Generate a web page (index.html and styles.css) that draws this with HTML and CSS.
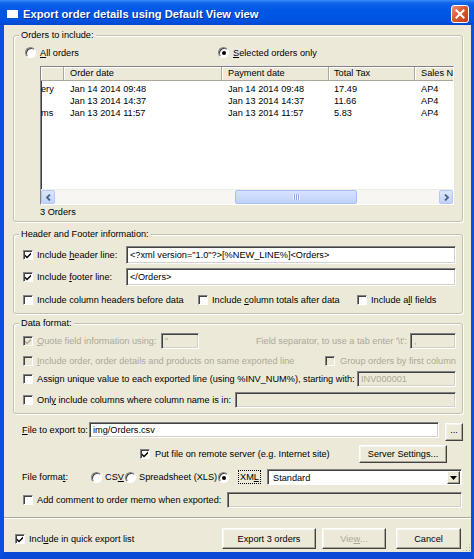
FILE: index.html
```html
<!DOCTYPE html>
<html>
<head>
<meta charset="utf-8">
<title>Export order details</title>
<link rel="stylesheet" href="styles.css">
</head>
<body>
<div class="window">
  <div class="titlebar">
    <span class="ticon"></span>
    <span class="title">Export order details using Default View view</span>
    <span class="close"><svg width="10" height="10" viewBox="0 0 10 10"><path d="M1.5 1.5 L8.5 8.5 M8.5 1.5 L1.5 8.5" stroke="#fff" stroke-width="2" stroke-linecap="square"/></svg></span>
  </div>
  <div class="client">
    <div class="group g1">
      <span class="legend">Orders to include:</span>
      <div class="row radio-row">
        <div class="item w-all"><span class="rb"></span><span class="t"><u>A</u>ll orders</span></div>
        <div class="item"><span class="rb on"></span><span class="t"><u>S</u>elected orders only</span></div>
      </div>
      <div class="list">
        <div class="lv-head">
          <div class="hc c1"></div>
          <div class="hc">Order date</div>
          <div class="hc">Payment date</div>
          <div class="hc c4">Total Tax</div>
          <div class="hc">Sales N</div>
        </div>
        <div class="lv-body">
          <div class="lv-row"><div class="cell c1">ery</div><div class="cell">Jan 14 2014 09:48</div><div class="cell">Jan 14 2014 09:48</div><div class="cell c4">17.49</div><div class="cell">AP4</div></div>
          <div class="lv-row"><div class="cell c1"></div><div class="cell">Jan 13 2014 14:37</div><div class="cell">Jan 13 2014 14:37</div><div class="cell c4">11.66</div><div class="cell">AP4</div></div>
          <div class="lv-row"><div class="cell c1">ms</div><div class="cell">Jan 13 2014 11:57</div><div class="cell">Jan 13 2014 11:57</div><div class="cell c4">5.83</div><div class="cell">AP4</div></div>
        </div>
        <div class="hscroll">
          <span class="sbtn"><svg width="7" height="7" viewBox="0 0 7 7"><path d="M5 0.5 L2 3.5 L5 6.5" fill="none" stroke="#4D6185" stroke-width="1.8"/></svg></span>
          <div class="track"><span class="thumb"><span class="grip"></span></span></div>
          <span class="sbtn"><svg width="7" height="7" viewBox="0 0 7 7"><path d="M2 0.5 L5 3.5 L2 6.5" fill="none" stroke="#4D6185" stroke-width="1.8"/></svg></span>
        </div>
      </div>
      <div class="status">3 Orders</div>
    </div>

    <div class="group g2">
      <span class="legend">Header and Footer information:</span>
      <div class="row r18">
        <span class="cb on"><svg width="7" height="7" viewBox="0 0 7 7"><path d="M0 2.5 L2 4.5 L6 0.5 V2.5 L2 6.5 L0 4.5 Z"/></svg></span>
        <span class="t lbl">Include <u>h</u>eader line:</span>
        <div class="inp w330">&lt;?xml version="1.0"?&gt;[%NEW_LINE%]&lt;Orders&gt;</div>
      </div>
      <div class="row r18 mt4">
        <span class="cb on"><svg width="7" height="7" viewBox="0 0 7 7"><path d="M0 2.5 L2 4.5 L6 0.5 V2.5 L2 6.5 L0 4.5 Z"/></svg></span>
        <span class="t lbl">Include <u>f</u>ooter line:</span>
        <div class="inp w330">&lt;/Orders&gt;</div>
      </div>
      <div class="row r12 mt8">
        <div class="item w175"><span class="cb"></span><span class="t">Include column headers before data</span></div>
        <div class="item w159"><span class="cb"></span><span class="t">Include <u>c</u>olumn totals after data</span></div>
        <div class="item"><span class="cb"></span><span class="t">Include a<u>l</u>l fields</span></div>
      </div>
    </div>

    <div class="group g3">
      <span class="legend">Data format:</span>
      <div class="row r16">
        <span class="cb dis"><svg width="7" height="7" viewBox="0 0 7 7"><path d="M0 2.5 L2 4.5 L6 0.5 V2.5 L2 6.5 L0 4.5 Z"/></svg></span>
        <span class="t off lbl2"><u>Q</u>uote field information using:</span>
        <div class="inp dis w38 h16">"</div>
        <span class="t off sep">Field separator, to use a tab enter '\t':</span>
        <div class="inp dis w46 h16">,</div>
      </div>
      <div class="row r12 mt6 clip">
        <div class="item w302"><span class="cb dis"></span><span class="t off"><u>I</u>nclude order, order details and products on same exported line</span></div>
        <div class="item"><span class="cb dis"></span><span class="t off gap5">Group orders by first column</span></div>
      </div>
      <div class="row r16 mt4">
        <span class="cb"></span>
        <span class="t">Assign unique value to each exported line (using %INV_NUM%), starting with:</span>
        <div class="inp dis w99 h16 push">INV000001</div>
      </div>
      <div class="row r16 mt5">
        <span class="cb"></span>
        <span class="t">Onl<u>y</u> include columns where column name is in:</span>
        <div class="inp dis w221 h16 push"></div>
      </div>
    </div>

    <div class="row orow file-row">
      <span class="lbl3"><u>F</u>ile to export to:</span>
      <div class="inp w350 h16">img/Orders.csv</div>
      <span class="btn dots">...</span>
    </div>

    <div class="row orow put-row">
      <span class="cb on"><svg width="7" height="7" viewBox="0 0 7 7"><path d="M0 2.5 L2 4.5 L6 0.5 V2.5 L2 6.5 L0 4.5 Z"/></svg></span>
      <span class="t gap5">Put file on remote server (e.g. Internet site)</span>
      <span class="btn srv">Server Settings...</span>
    </div>

    <div class="row orow fmt-row">
      <span class="lbl4">File forma<u>t</u>:</span>
      <div class="item w34"><span class="rb"></span><span class="t gap3">CS<u>V</u></span></div>
      <div class="item w93"><span class="rb"></span><span class="t gap3">Spreadsheet (XLS)</span></div>
      <div class="item"><span class="rb on"></span><span class="t focus">XM<u>L</u></span></div>
      <div class="sel"><span class="sel-txt">Standard</span><span class="dd"><svg width="7" height="4" viewBox="0 0 7 4"><path d="M0 0 H7 L3.5 4 Z"/></svg></span></div>
    </div>

    <div class="row orow memo-row">
      <span class="cb"></span>
      <span class="t">Add comment to order memo when exported:</span>
      <div class="inp dis w235 h16 push"></div>
    </div>

    <div class="groove"></div>

    <div class="row orow bottom-row">
      <span class="cb on"><svg width="7" height="7" viewBox="0 0 7 7"><path d="M0 2.5 L2 4.5 L6 0.5 V2.5 L2 6.5 L0 4.5 Z"/></svg></span>
      <span class="t">Incl<u>u</u>de in quick export list</span>
      <div class="btns">
        <span class="btn b-exp">Export 3 orders</span>
        <span class="btn b-view off">Vie<u>w</u>...</span>
        <span class="btn b-can">Cancel</span>
      </div>
    </div>
    <span class="grip-corner"></span>
  </div>
</div>
</body>
</html>
```

FILE: styles.css
```css
* { box-sizing: border-box; }
html, body { margin: 0; padding: 0; }
body {
  width: 474px;
  height: 559px;
  overflow: hidden;
  font-family: "Liberation Sans", Arial, sans-serif;
  font-size: 9.2px;
  color: #000;
  background: #0A4FE0;
}
u { text-decoration: underline; text-underline-offset: 1px; }

.window { width: 474px; height: 559px; display: flex; flex-direction: column; }

.titlebar {
  height: 25px;
  flex: none;
  display: flex;
  align-items: center;
  padding: 3px 5px 0 7px;
  background: linear-gradient(to bottom, #3B8CF5 0px, #1064EA 3px, #0057E6 10px, #0054E3 19px, #0048D2 25px);
}
.ticon {
  width: 11px;
  height: 8px;
  background: #fff;
  margin-right: 5px;
  flex: none;
}
.title {
  flex: 1;
  color: #fff;
  font-weight: bold;
  font-size: 11.2px;
  white-space: nowrap;
  overflow: hidden;
  text-shadow: 1px 1px 0 #0A2A8A;
}
.close {
  width: 18px;
  height: 18px;
  flex: none;
  border: 1px solid #fff;
  border-radius: 3px;
  background: linear-gradient(135deg, #EE9476 0%, #DA5A32 45%, #C23E14 100%);
  display: flex;
  align-items: center;
  justify-content: center;
}

.client {
  flex: 1;
  position: relative;
  background: #ECE9D8;
  border-left: 4px solid #0A4FE0;
  border-right: 3px solid #0A4FE0;
  border-bottom: 7px solid #0A48D6;
  display: flex;
  flex-direction: column;
}

/* group boxes */
.group {
  position: relative;
  flex: none;
  margin: 0 8px 0 9px;
  border: 1px solid #C3C0B0;
  border-radius: 3px;
  box-shadow: inset 1px 1px 0 #fff, 1px 1px 0 #fff;
}
.legend {
  position: absolute;
  top: -7px;
  left: 5px;
  padding: 0 2px;
  line-height: 12px;
  background: #ECE9D8;
  white-space: nowrap;
}
.g1 { margin-top: 10px; padding: 10px 0 2px 11px; }
.g2 { margin-top: 12px; padding: 11px 6px 7px 9px; }
.g3 { margin-top: 9px; padding: 9px 6px 5px 9px; }

.row { display: flex; align-items: center; flex: none; }
.item { display: flex; align-items: center; flex: none; }
.clip { overflow: hidden; white-space: nowrap; }
.r12 { height: 12px; }
.r16 { height: 16px; }
.r18 { height: 18px; }
.mt4 { margin-top: 4px; }
.mt5 { margin-top: 5px; }
.mt6 { margin-top: 6px; }
.mt8 { margin-top: 8px; }

.radio-row { height: 13px; }
.w-all { width: 193px; }
.w175 { width: 175px; }
.w159 { width: 159px; }
.w302 { width: 302px; }
.w34 { width: 34px; }
.w93 { width: 93px; }

.t { margin-left: 4px; white-space: nowrap; }
.t.gap5 { margin-left: 5px; }
.t.gap3 { margin-left: 3px; }
.off { color: #ACA899; }
.lbl { width: 89px; flex: none; }
.lbl2 { width: 124px; flex: none; }
.sep { margin-left: auto; margin-right: 3px; }
.push { margin-left: auto; }

/* checkbox & radio */
.cb {
  width: 10px;
  height: 10px;
  flex: none;
  background: #fff;
  border: 1px solid;
  border-color: #848284 #fff #fff #848284;
  box-shadow: inset 1px 1px 0 #424142;
  display: flex;
  align-items: center;
  justify-content: center;
  padding: 1px 0 0 1px;
}
.cb svg { fill: #000; display: block; }
.cb.dis { background: #ECE9D8; }
.cb.dis svg { fill: #ACA899; }

.rb {
  width: 11px;
  height: 11px;
  flex: none;
  border-radius: 50%;
  background: #fff;
  border: 1px solid;
  border-color: #848284 #fff #fff #848284;
  box-shadow: inset 1px 1px 0 #424142;
  display: flex;
  align-items: center;
  justify-content: center;
}
.rb.on::after {
  content: "";
  width: 4px;
  height: 4px;
  border-radius: 50%;
  background: #000;
  margin: 1px 0 0 1px;
}

/* inputs */
.inp {
  height: 18px;
  flex: none;
  background: #fff;
  border: 1px solid;
  border-color: #848284 #fff #fff #848284;
  box-shadow: inset 1px 1px 0 #424142, inset -1px -1px 0 #D4D0C8;
  padding-left: 3px;
  display: flex;
  align-items: center;
  white-space: nowrap;
  overflow: hidden;
}
.inp.dis { background: #ECE9D8; color: #ACA899; }
.h16 { height: 16px; }
.w330 { width: 330px; }
.w38 { width: 38px; }
.w46 { width: 46px; }
.w99 { width: 99px; }
.w221 { width: 221px; }
.w235 { width: 235px; }
.w350 { width: 350px; }

/* list view */
.list {
  margin: 7px 0 0 15px;
  width: 414px;
  height: 139px;
  background: #fff;
  border: 1px solid;
  border-color: #848284 #fff #fff #848284;
  box-shadow: inset 1px 1px 0 #424142;
  display: flex;
  flex-direction: column;
  overflow: hidden;
}
.lv-head, .lv-row {
  display: grid;
  grid-template-columns: 23px 158px 107px 86px 1fr;
}
.lv-head { height: 14px; flex: none; background: #ECE9D8; }
.hc {
  line-height: 13px;
  padding-left: 6px;
  border-right: 1px solid #ACA899;
  border-bottom: 1px solid #ACA899;
  box-shadow: inset 1px 1px 0 #fff;
  white-space: nowrap;
  overflow: hidden;
}
.hc:last-child { border-right: none; }
.lv-body { flex: 1; padding-top: 2px; }
.lv-row { height: 12px; line-height: 12px; }
.cell { padding-left: 6px; white-space: nowrap; overflow: hidden; }
.c1 { padding-left: 0; }
.c4 { padding-left: 5px; }

.hscroll {
  height: 15px;
  flex: none;
  display: flex;
  background: #F7F6F2;
  border-top: 1px solid #EEEDE5;
}
.sbtn {
  width: 14px;
  height: 14px;
  flex: none;
  border: 1px solid #B4C8F6;
  border-radius: 2px;
  background: linear-gradient(to bottom, #DCE6FD, #C1D3FB);
  display: flex;
  align-items: center;
  justify-content: center;
}
.track { flex: 1; display: flex; }
.thumb {
  margin-left: 180px;
  width: 122px;
  height: 14px;
  border: 1px solid #A9BDF2;
  border-radius: 2px;
  background: linear-gradient(to bottom, #D6E2FD, #C0D2FA);
  display: flex;
  align-items: center;
  justify-content: center;
}
.grip {
  width: 7px;
  height: 6px;
  background: repeating-linear-gradient(to right, #EEF4FE 0 1px, #8CA6E3 1px 2px);
}
.status { margin-left: 15px; height: 14px; line-height: 14px; }

/* outer rows */
.orow { flex: none; }
.file-row { margin: 8px 0 0 18px; height: 19px; align-items: flex-start; }
.lbl3 { width: 67px; flex: none; line-height: 16px; white-space: nowrap; }
.btn {
  display: flex;
  align-items: center;
  justify-content: center;
  flex: none;
  background: #ECE9D8;
  border: 1px solid;
  border-color: #fff #424142 #424142 #fff;
  box-shadow: inset -1px -1px 0 #ACA899, inset 1px 1px 0 #F6F5EF;
  white-space: nowrap;
}
.dots { width: 18px; height: 18px; margin: 1px 0 0 6px; padding-bottom: 4px; }
.put-row { margin: 4px 0 0 136px; height: 18px; }
.srv { width: 88px; height: 18px; margin-left: auto; margin-right: 24px; }

.fmt-row { margin: 6px 0 0 18px; height: 16px; }
.lbl4 { width: 69px; flex: none; white-space: nowrap; }
.focus { margin-left: 10px; outline: 1px dotted #000; outline-offset: 0; padding: 0 1px; line-height: 12px; }
.sel {
  width: 195px;
  height: 16px;
  margin-left: auto;
  margin-right: 9px;
  background: #fff;
  border: 1px solid;
  border-color: #848284 #fff #fff #848284;
  box-shadow: inset 1px 1px 0 #424142;
  display: flex;
  align-items: center;
  padding: 1px 1px 0 1px;
}
.sel-txt { flex: 1; padding-left: 4px; }
.dd {
  width: 13px;
  height: 13px;
  flex: none;
  background: #ECE9D8;
  border: 1px solid;
  border-color: #fff #424142 #424142 #fff;
  box-shadow: inset -1px -1px 0 #ACA899;
  display: flex;
  align-items: center;
  justify-content: center;
}
.dd svg { fill: #000; display: block; }

.memo-row { margin: 7px 9px 0 19px; height: 16px; }

.groove {
  flex: none;
  height: 2px;
  margin-top: 9px;
  border-top: 1px solid #ACA899;
  border-bottom: 1px solid #fff;
}
.bottom-row { margin: 9px 0 0 11px; height: 21px; }
.btns { margin-left: auto; margin-right: 10px; display: flex; }
.b-exp { width: 94px; height: 21px; }
.b-view { width: 64px; height: 21px; margin-left: 6px; color: #ACA899; }
.b-can { width: 65px; height: 21px; margin-left: 10px; }

.grip-corner {
  position: absolute;
  right: 0;
  bottom: 0;
  width: 9px;
  height: 9px;
  background: radial-gradient(circle, #ACA899 0.8px, transparent 1px) 0 0 / 3px 3px;
  clip-path: polygon(100% 0, 100% 100%, 0 100%);
}
```
